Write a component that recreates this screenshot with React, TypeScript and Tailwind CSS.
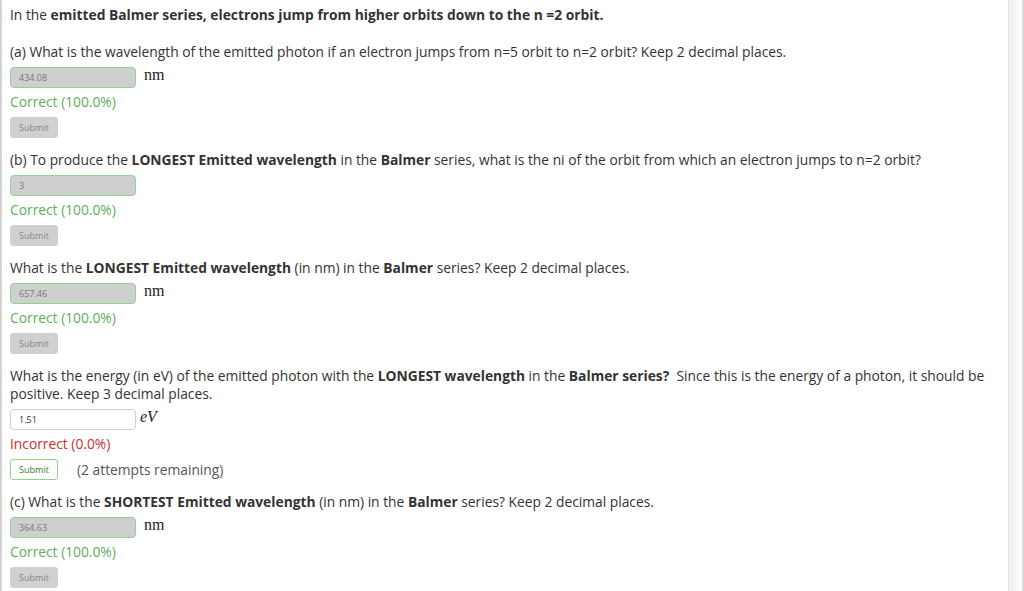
import React from 'react'

type Part = {
  prompt: React.ReactNode
  value: string
  unit?: 'nm' | 'eV'
  correct: boolean
  remaining?: string
}

const parts: Part[] = [
  {
    prompt: (
      <>(a) What is the wavelength of the emitted photon if an electron jumps from n=5 orbit to n=2 orbit? Keep 2 decimal places.</>
    ),
    value: '434.08',
    unit: 'nm',
    correct: true,
  },
  {
    prompt: (
      <>
        (b) To produce the <b>LONGEST Emitted wavelength</b> in the <b>Balmer</b> series, what is the ni of the orbit from which an
        electron jumps to n=2 orbit?
      </>
    ),
    value: '3',
    correct: true,
  },
  {
    prompt: (
      <>
        What is the <b>LONGEST Emitted wavelength</b> (in nm) in the <b>Balmer</b> series? Keep 2 decimal places.
      </>
    ),
    value: '657.46',
    unit: 'nm',
    correct: true,
  },
  {
    prompt: (
      <>
        What is the energy (in eV) of the emitted photon with the <b>LONGEST wavelength</b> in the <b>Balmer series?</b>&nbsp; Since this
        is the energy of a photon, it should be positive. Keep 3 decimal places.
      </>
    ),
    value: '1.51',
    unit: 'eV',
    correct: false,
    remaining: '(2 attempts remaining)',
  },
  {
    prompt: (
      <>
        (c) What is the <b>SHORTEST Emitted wavelength</b> (in nm) in the <b>Balmer</b> series? Keep 2 decimal places.
      </>
    ),
    value: '364.63',
    unit: 'nm',
    correct: true,
  },
]

export default function App() {
  return (
    <div className="flex min-h-[591px] bg-white">
      <div
        className="flex-1 border-l-2 border-[#d4d4d4] pl-2 pt-[6px] text-[13.8px] leading-[18px] text-[#333]"
        style={{ fontFamily: '"Open Sans", sans-serif' }}
      >
        <p>
          In the <b>emitted Balmer series, electrons jump from higher orbits down to the n =2 orbit.</b>
        </p>
        <div className="mt-[19px] flex flex-col gap-[13px]">
          {parts.map((p, i) => (
            <PartBlock key={i} part={p} />
          ))}
        </div>
      </div>
      <div className="w-[16px] border-l border-[#e2e2e2] bg-gradient-to-r from-[#efefef] to-white">
        <div className="ml-auto h-full w-[2px] bg-[#d9d9d9]" />
      </div>
    </div>
  )
}

function PartBlock({ part }: { part: Part }) {
  const locked = part.correct
  return (
    <div>
      <p className="pr-3">{part.prompt}</p>
      <div className="mt-[6px] flex items-center">
        <div
          className={
            locked
              ? 'flex h-[21px] w-[126px] items-center rounded-[4px] border border-[#8fd48f] bg-[#cfcfcf] pl-[8px] text-[9px] text-[#777]'
              : 'flex h-[21px] w-[126px] items-center rounded-[4px] border border-[#cfcfcf] bg-white pl-[8px] text-[9px] text-[#333]'
          }
        >
          {part.value}
        </div>
        {part.unit === 'nm' && (
          <span className="ml-[8px] -mt-[5px] text-[16px] text-[#222]" style={{ fontFamily: '"Liberation Serif", serif' }}>
            nm
          </span>
        )}
        {part.unit === 'eV' && (
          <span className="ml-[4px] -mt-[6px] text-[16px] italic text-[#222]" style={{ fontFamily: '"Liberation Serif", serif' }}>
            eV
          </span>
        )}
      </div>
      <p className={part.correct ? 'mt-[5px] text-[#5cae5c]' : 'mt-[5px] text-[#c9302c]'}>
        {part.correct ? 'Correct (100.0%)' : 'Incorrect (0.0%)'}
      </p>
      <div className="mt-[6px] flex items-center">
        <button
          className={
            locked
              ? 'h-[21px] w-[48px] rounded-[3px] border border-[#d0d0d0] bg-[#d0d0d0] text-[9px] text-[#888]'
              : 'h-[21px] w-[48px] rounded-[3px] border border-[#8fd48f] bg-white text-[9px] text-[#3a7a3a]'
          }
        >
          Submit
        </button>
        {part.remaining && <span className="ml-[19px] text-[#555]">{part.remaining}</span>}
      </div>
    </div>
  )
}
